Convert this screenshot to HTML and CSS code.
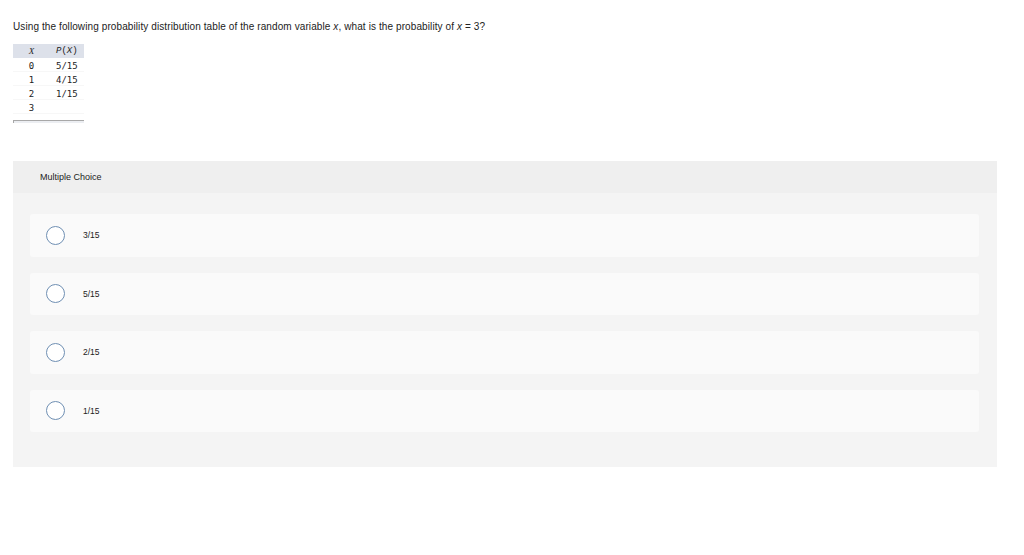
FILE: index.html
```html
<!DOCTYPE html>
<html>
<head>
<meta charset="utf-8">
<link rel="stylesheet" href="styles.css">
</head>
<body>
<div class="page">
  <p class="question">Using the following probability distribution table of the random variable <i>x</i>, what is the probability of <i>x</i> = 3?</p>
  <div class="tablewrap">
    <div class="dist">
      <div class="cell head c1"><i>X</i></div><div class="cell head c2"><i>P</i>(<i>X</i>)</div>
      <div class="cell c1">0</div><div class="cell c2">5/15</div>
      <div class="cell c1">1</div><div class="cell c2">4/15</div>
      <div class="cell c1">2</div><div class="cell c2">1/15</div>
      <div class="cell c1">3</div><div class="cell c2"></div>
    </div>
    <div class="scrollbar"></div>
  </div>
  <div class="panel">
    <div class="panel-head">Multiple Choice</div>
    <div class="choices">
      <div class="choice"><span class="radio"></span><span class="label">3/15</span></div>
      <div class="choice"><span class="radio"></span><span class="label">5/15</span></div>
      <div class="choice"><span class="radio"></span><span class="label">2/15</span></div>
      <div class="choice"><span class="radio"></span><span class="label">1/15</span></div>
    </div>
  </div>
</div>
</body>
</html>
```
FILE: styles.css
```css
html, body { margin: 0; padding: 0; background: #fff; }
.page { padding: 20px 27px 0 13px; font-family: "Liberation Sans", Arial, sans-serif; color: #222; }
.question { margin: 0; font-size: 10px; line-height: 14px; letter-spacing: 0.1px; }
.tablewrap { width: 71px; margin-top: 10px; }
.dist { display: grid; grid-template-columns: 37px 34px; grid-auto-rows: 14px; font-family: "DejaVu Sans Mono", monospace; font-size: 9px; color: #222; }
.cell { line-height: 12px; padding-top: 2px; border-bottom: 1px solid #f7f7f7; box-sizing: border-box; }
.cell.head { background: #dde1ea; border-bottom: none; padding-top: 1px; font-family: "Liberation Serif", serif; font-size: 9px; }
.cell.head.c2 { font-family: "Liberation Mono", monospace; font-size: 9px; }
.c1 { text-align: center; }
.c2 { padding-left: 6px; }
.scrollbar { margin-top: 6px; height: 2px; border-top: 1px solid #a8a8a8; border-left: 1px solid #a8a8a8; background: #eceef2; }
.panel { margin-top: 38px; background: #f4f4f4; padding-bottom: 35px; }
.panel-head { background: #efefef; height: 32px; display: flex; align-items: center; padding-left: 27px; font-size: 9px; color: #222; }
.choices { display: flex; flex-direction: column; gap: 16px; padding: 21px 18px 0 17px; }
.choice { background: #fafafa; height: 42.5px; border-radius: 3px; display: flex; align-items: center; padding-left: 16px; }
.radio { width: 17px; height: 17px; border: 1px solid #6f8fb3; border-radius: 50%; background: #fff; box-sizing: content-box; }
.label { margin-left: 18px; font-size: 8.5px; color: #222; }
```
